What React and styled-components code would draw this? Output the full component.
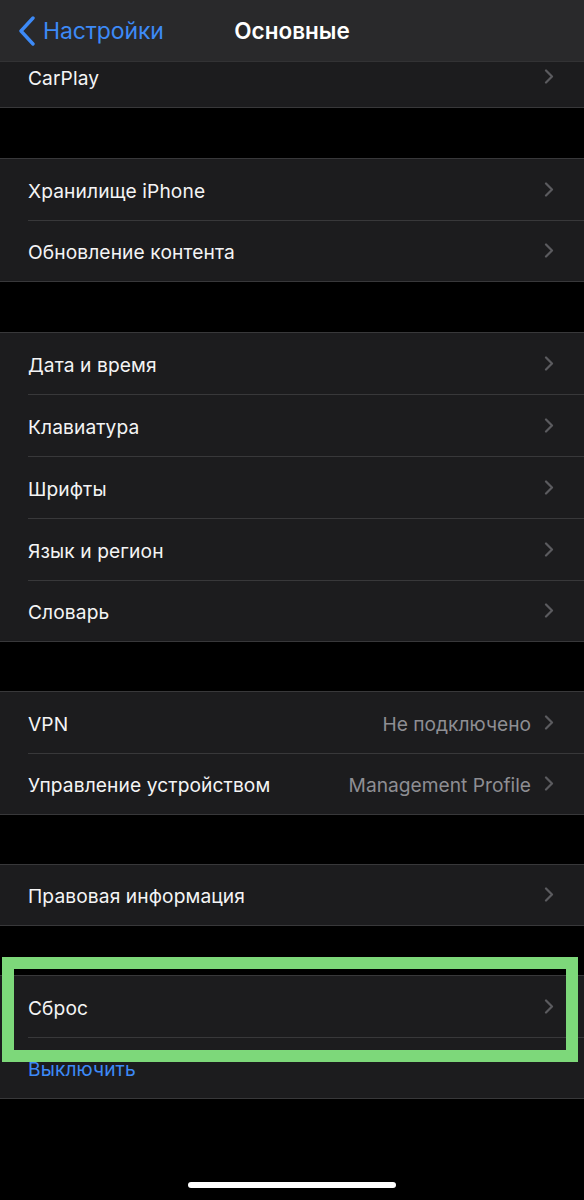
import React from "react";
import styled, { createGlobalStyle } from "styled-components";

const Global = createGlobalStyle`
  html, body { margin: 0; padding: 0; background: #000; }
  body { font-family: Inter, "Noto Sans", "Liberation Sans", sans-serif; -webkit-font-smoothing: antialiased; }
  * { box-sizing: border-box; }
`;

const Page = styled.div`
  position: relative;
  width: 584px;
  height: 1200px;
  background: #000;
  overflow: hidden;
  display: flex;
  flex-direction: column;
`;

const NavBar = styled.header`
  position: relative;
  z-index: 2;
  height: 62px;
  flex: none;
  background: #29292b;
  border-bottom: 1px solid #323234;
  display: flex;
  align-items: center;
`;

const BackButton = styled.div`
  display: flex;
  align-items: center;
  gap: 7px;
  padding-left: 18px;
  color: #3d8af7;
  font-size: 23px;
  letter-spacing: -0.1px;
  width: 200px;
`;

const Title = styled.div`
  position: absolute;
  left: 0;
  right: 0;
  text-align: center;
  color: #fff;
  font-size: 22.5px;
  font-weight: 600;
  pointer-events: none;
`;

const Scroll = styled.div`
  flex: 1;
  overflow: hidden;
`;

const List = styled.div`
  margin-top: -16px;
  display: flex;
  flex-direction: column;
`;

const Group = styled.section`
  background: #1c1c1e;
  border-top: 1px solid #38383a;
  border-bottom: 1px solid #38383a;
  margin-top: ${(p) => p.$gap}px;
`;

const Row = styled.div`
  height: ${(p) => (p.$last ? 60 : 62)}px;
  display: flex;
  align-items: center;
  padding: 2px 30px 0 28px;
  position: relative;
  ${(p) =>
    !p.$last &&
    `&::after {
      content: "";
      position: absolute;
      left: 28px;
      right: 0;
      bottom: 0;
      height: 1px;
      background: #38383a;
    }`}
`;

const Label = styled.span`
  flex: 1;
  color: ${(p) => (p.$action ? "#3d8af7" : "#f4f4f5")};
  font-size: 19.2px;
  letter-spacing: 0.1px;
`;

const Value = styled.span`
  color: #8e8e93;
  font-size: 19.2px;
  margin-right: 13px;
`;

const Highlight = styled.div`
  position: absolute;
  left: 2px;
  top: 957px;
  width: 576px;
  height: 105px;
  border: 12px solid #7dd87a;
  z-index: 3;
  pointer-events: none;
`;

const HomeIndicator = styled.div`
  position: absolute;
  left: 188px;
  top: 1182px;
  width: 208px;
  height: 6px;
  border-radius: 3px;
  background: #fff;
  z-index: 3;
`;

const Chevron = () => (
  <svg width="10" height="15" viewBox="0 0 10 15" style={{ flex: "none", marginTop: -3 }}>
    <path d="M2 1.5 L8 7.5 L2 13.5" fill="none" stroke="#5b5b5f" strokeWidth="2.2" strokeLinecap="round" strokeLinejoin="round" />
  </svg>
);

const BackChevron = () => (
  <svg width="18" height="30" viewBox="0 0 18 30">
    <path d="M15 2 L3 15 L15 28" fill="none" stroke="#3d8af7" strokeWidth="3.4" strokeLinecap="round" strokeLinejoin="round" />
  </svg>
);

const groups = [
  { gap: 0, rows: [{ label: "CarPlay" }] },
  { gap: 50, rows: [{ label: "Хранилище iPhone" }, { label: "Обновление контента" }] },
  {
    gap: 50,
    rows: [
      { label: "Дата и время" },
      { label: "Клавиатура" },
      { label: "Шрифты" },
      { label: "Язык и регион" },
      { label: "Словарь" },
    ],
  },
  {
    gap: 49,
    rows: [
      { label: "VPN", value: "Не подключено" },
      { label: "Управление устройством", value: "Management Profile" },
    ],
  },
  { gap: 49, rows: [{ label: "Правовая информация" }] },
  { gap: 49, rows: [{ label: "Сброс" }, { label: "Выключить", action: true }] },
];

export default function App() {
  return (
    <Page>
      <Global />
      <NavBar>
        <BackButton>
          <BackChevron />
          <span>Настройки</span>
        </BackButton>
        <Title>Основные</Title>
      </NavBar>
      <Scroll>
        <List>
          {groups.map((g, gi) => (
            <Group key={gi} $gap={g.gap}>
              {g.rows.map((r, ri) => (
                <Row key={ri} $last={ri === g.rows.length - 1}>
                  <Label $action={r.action}>{r.label}</Label>
                  {r.value && <Value>{r.value}</Value>}
                  {!r.action && <Chevron />}
                </Row>
              ))}
            </Group>
          ))}
        </List>
      </Scroll>
      <Highlight />
      <HomeIndicator />
    </Page>
  );
}
